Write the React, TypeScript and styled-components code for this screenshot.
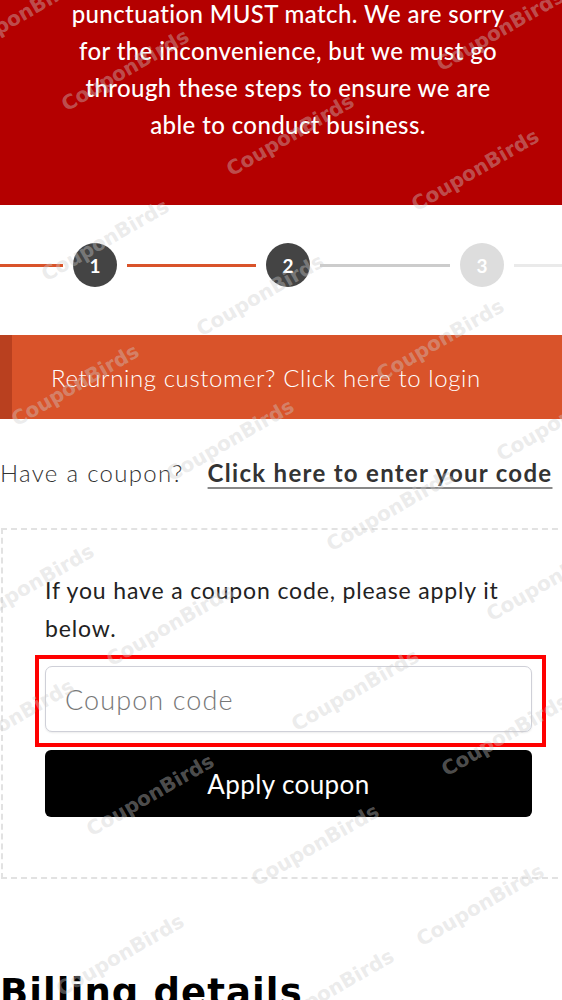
import styled, { createGlobalStyle } from "styled-components";

const GlobalStyle = createGlobalStyle`
  body {
    margin: 0;
    font-family: Lato, "Open Sans", sans-serif;
    background: #fff;
  }
`;

const Page = styled.div`
  position: relative;
  width: 562px;
  height: 1000px;
  overflow: hidden;
`;

const Banner = styled.div`
  display: flow-root;
  background: #b40000;
  color: #fff;
  text-align: center;
  height: 205px;
  padding-left: 14px;
`;

const BannerText = styled.p`
  margin: -5px 0 0;
  font-size: 24px;
  line-height: 37px;
  font-weight: 500;
  letter-spacing: 0.4px;

  span {
    display: block;
  }
`;

const Steps = styled.div`
  display: flex;
  align-items: center;
  margin-top: 38px;
  height: 44px;
`;

const Line = styled.div<{ $w?: number; $color: string }>`
  height: 3px;
  background: ${(p) => p.$color};
  flex: ${(p) => (p.$w ? `0 0 ${p.$w}px` : "1")};
`;

const Circle = styled.div<{ $active?: boolean }>`
  width: 44px;
  height: 44px;
  border-radius: 50%;
  margin: 0 10px;
  background: ${(p) => (p.$active ? "#444" : "#dddddd")};
  color: #fff;
  font-weight: 700;
  font-size: 19px;
  display: flex;
  align-items: center;
  justify-content: center;
`;

const LoginBar = styled.div`
  margin-top: 48px;
  height: 84px;
  background: #d9532a;
  border-left: 12px solid #b9401f;
  padding-left: 39px;
  display: flex;
  align-items: center;
  color: #fff;
  font-size: 24px;
  font-weight: 300;
  letter-spacing: 0.6px;
`;

const CouponRow = styled.div`
  display: flex;
  gap: 24px;
  margin-top: 38px;
  font-size: 24px;
  line-height: 32px;
  color: #333;
  font-weight: 300;
  letter-spacing: 1.3px;
  white-space: nowrap;
`;

const CouponLink = styled.a`
  color: #333;
  font-weight: 700;
  text-decoration: underline;
  text-underline-offset: 5px;
  text-decoration-color: #888;
  text-decoration-thickness: 2px;
`;

const CouponBox = styled.div`
  margin: 39px -16px 0 1px;
  border: 2px dashed #e2e2e2;
  border-right-color: transparent;
  padding: 41px 44px 60px 42px;
`;

const Intro = styled.p`
  margin: 0;
  font-size: 23px;
  line-height: 38px;
  color: #222;
  font-weight: 400;
  letter-spacing: 0.85px;
`;

const FieldWrap = styled.div`
  position: relative;
  margin-top: 19px;
`;

const Input = styled.input`
  box-sizing: border-box;
  display: block;
  width: 100%;
  height: 66px;
  border: 1px solid #cfd0d8;
  border-radius: 7px;
  padding: 0 19px;
  font-family: Lato, sans-serif;
  font-size: 27px;
  font-weight: 300;
  letter-spacing: 1.1px;
  color: #333;
  box-shadow: 0 1px 2px rgba(0, 0, 0, 0.08);

  &::placeholder {
    color: #777;
  }
`;

const Highlight = styled.div`
  position: absolute;
  top: -11px;
  left: -10px;
  right: -14px;
  bottom: -15px;
  border: 4px solid #ff0000;
  pointer-events: none;
`;

const ApplyButton = styled.button`
  display: block;
  width: 100%;
  height: 67px;
  margin-top: 18px;
  border: none;
  border-radius: 6px;
  background: #000;
  color: #fff;
  font-family: Lato, sans-serif;
  font-size: 26px;
  font-weight: 400;
  letter-spacing: 0.4px;
`;

const Heading = styled.h2`
  margin: 92px 0 0;
  font-family: "DejaVu Sans", sans-serif;
  font-size: 37px;
  line-height: 44px;
  font-weight: 700;
  letter-spacing: 1.1px;
  color: #000;
`;

const Watermark = styled.span`
  position: absolute;
  transform: translate(-50%, -50%) rotate(-30deg);
  font-family: "DejaVu Sans", sans-serif;
  font-weight: 700;
  font-size: 20px;
  color: rgba(205, 205, 205, 0.4);
  pointer-events: none;
  white-space: nowrap;
`;

const marks: [number, number][] = [
  [20, 15], [500, 30], [125, 70], [290, 135], [475, 170],
  [105, 240], [260, 295], [440, 340], [75, 385], [230, 440],
  [560, 420], [390, 510], [30, 585], [550, 580], [170, 625],
  [355, 690], [10, 720], [505, 735], [150, 795], [315, 845],
  [480, 905], [120, 955], [330, 990],
];

export default function App() {
  return (
    <Page>
      <GlobalStyle />
      <Banner>
        <BannerText>
          <span>punctuation MUST match. We are sorry</span>
          <span>for the inconvenience, but we must go</span>
          <span>through these steps to ensure we are</span>
          <span>able to conduct business.</span>
        </BannerText>
      </Banner>

      <Steps>
        <Line $w={63} $color="#d9532a" />
        <Circle $active>1</Circle>
        <Line $w={129} $color="#d9532a" />
        <Circle $active>2</Circle>
        <Line $w={130} $color="#cccccc" />
        <Circle>3</Circle>
        <Line $color="#eaeaea" />
      </Steps>

      <LoginBar>Returning customer? Click here to login</LoginBar>

      <CouponRow>
        <span>Have a coupon?</span>
        <CouponLink href="#">Click here to enter your code</CouponLink>
      </CouponRow>

      <CouponBox>
        <Intro>If you have a coupon code, please apply it below.</Intro>
        <FieldWrap>
          <Input placeholder="Coupon code" />
          <Highlight />
        </FieldWrap>
        <ApplyButton>Apply coupon</ApplyButton>
      </CouponBox>

      <Heading>Billing details</Heading>

      {marks.map(([x, y], i) => (
        <Watermark key={i} style={{ left: x, top: y }}>
          CouponBirds
        </Watermark>
      ))}
    </Page>
  );
}
